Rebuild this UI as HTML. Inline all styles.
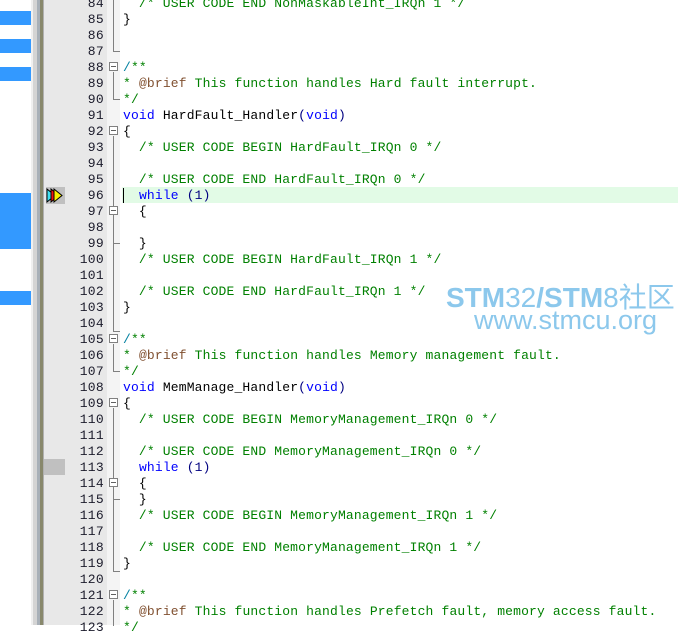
<!DOCTYPE html>
<html><head><meta charset="utf-8"><style>
*{margin:0;padding:0}
body{width:678px;height:625px;overflow:hidden;background:#fff;position:relative;font-family:"Liberation Mono",monospace;font-size:13px}
.a{position:absolute}
.ln{position:absolute;left:44px;width:60px;text-align:right;height:16px;line-height:16px;color:#1a1a2a;margin-top:1px;letter-spacing:0.3px}
.cl{position:absolute;left:123px;height:16px;line-height:16px;white-space:pre;color:#000;letter-spacing:0.16px;margin-top:1px}
.c{color:#008000}.k{color:#0000ff}.p{color:#000080}.d{color:#805030}.t{color:#0080a0}
.fb{position:absolute;left:109px;width:9px;height:9px;border:1px solid #808080;background:#fff;box-sizing:border-box}
.fb:after{content:"";position:absolute;left:1px;top:3px;width:5px;height:1px;background:#606060}
.vl{position:absolute;left:113px;width:1px;background:#808080}
.hk{position:absolute;left:113px;width:7px;height:1px;background:#808080}
</style></head><body>
<div class="a" style="left:0;top:0;width:31px;height:625px;background:#fff"></div>
<div class="a" style="left:0;top:11px;width:31px;height:14px;background:#3399ff"></div>
<div class="a" style="left:0;top:39px;width:31px;height:14px;background:#3399ff"></div>
<div class="a" style="left:0;top:67px;width:31px;height:14px;background:#3399ff"></div>
<div class="a" style="left:0;top:193px;width:31px;height:56px;background:#3399ff"></div>
<div class="a" style="left:0;top:291px;width:31px;height:14px;background:#3399ff"></div>
<div class="a" style="left:31px;top:0;width:2px;height:625px;background:#f0f0f0"></div>
<div class="a" style="left:33px;top:0;width:4px;height:625px;background:#d4d4d4"></div>
<div class="a" style="left:37px;top:0;width:3px;height:625px;background:#a8b0b8"></div>
<div class="a" style="left:40px;top:0;width:3px;height:625px;background:#88886c"></div>
<div class="a" style="left:43px;top:0;width:1px;height:625px;background:#b0b0b0"></div>
<div class="a" style="left:44px;top:0;width:63px;height:625px;background:#e8e8e8"></div>
<div class="a" style="left:107px;top:0;width:13px;height:625px;background:#f4f4f4"></div>
<div class="a" style="left:122px;top:187px;width:556px;height:16px;background:#e2fbe6"></div>
<div class="a" style="left:123px;top:188px;width:1px;height:15px;background:#000"></div>
<div class="a" style="left:46px;top:187px;width:19px;height:17px;background:#c0c0c0"></div>
<svg class="a" style="left:46px;top:187px" width="19" height="17"><polygon points="1,2 9,8.5 1,15" fill="#40e0f0" stroke="#000" stroke-width="1"/><polygon points="5,2 13,8.5 5,15" fill="#f01010" stroke="#000" stroke-width="1"/><polygon points="8,2 16,8.5 8,15" fill="#f8f000" stroke="#000" stroke-width="1"/></svg>
<div class="a" style="left:44px;top:459px;width:21px;height:16px;background:#c0c0c0"></div>

<div class="vl" style="top:0;height:51px"></div><div class="hk" style="top:51px"></div>
<div class="vl" style="top:72px;height:27px"></div><div class="hk" style="top:99px"></div>
<div class="vl" style="top:136px;height:195px"></div><div class="hk" style="top:331px"></div>
<div class="hk" style="top:243px"></div>
<div class="vl" style="top:344px;height:27px"></div><div class="hk" style="top:371px"></div>
<div class="vl" style="top:408px;height:163px"></div><div class="hk" style="top:571px"></div>
<div class="hk" style="top:499px"></div>
<div class="vl" style="top:600px;height:26px"></div>
<div class="fb" style="top:62px"></div>
<div class="fb" style="top:126px"></div>
<div class="fb" style="top:206px"></div>
<div class="fb" style="top:334px"></div>
<div class="fb" style="top:398px"></div>
<div class="fb" style="top:478px"></div>
<div class="fb" style="top:590px"></div>

<div class="ln" style="top:-5px">84</div><div class="ln" style="top:11px">85</div><div class="ln" style="top:27px">86</div><div class="ln" style="top:43px">87</div><div class="ln" style="top:59px">88</div><div class="ln" style="top:75px">89</div><div class="ln" style="top:91px">90</div><div class="ln" style="top:107px">91</div><div class="ln" style="top:123px">92</div><div class="ln" style="top:139px">93</div><div class="ln" style="top:155px">94</div><div class="ln" style="top:171px">95</div><div class="ln" style="top:187px">96</div><div class="ln" style="top:203px">97</div><div class="ln" style="top:219px">98</div><div class="ln" style="top:235px">99</div><div class="ln" style="top:251px">100</div><div class="ln" style="top:267px">101</div><div class="ln" style="top:283px">102</div><div class="ln" style="top:299px">103</div><div class="ln" style="top:315px">104</div><div class="ln" style="top:331px">105</div><div class="ln" style="top:347px">106</div><div class="ln" style="top:363px">107</div><div class="ln" style="top:379px">108</div><div class="ln" style="top:395px">109</div><div class="ln" style="top:411px">110</div><div class="ln" style="top:427px">111</div><div class="ln" style="top:443px">112</div><div class="ln" style="top:459px">113</div><div class="ln" style="top:475px">114</div><div class="ln" style="top:491px">115</div><div class="ln" style="top:507px">116</div><div class="ln" style="top:523px">117</div><div class="ln" style="top:539px">118</div><div class="ln" style="top:555px">119</div><div class="ln" style="top:571px">120</div><div class="ln" style="top:587px">121</div><div class="ln" style="top:603px">122</div><div class="ln" style="top:619px">123</div>

<div class="cl" style="top:-5px"><span class="c">  /* USER CODE END NonMaskableInt_IRQn 1 */</span></div>
<div class="cl" style="top:11px">}</div>
<div class="cl" style="top:59px"><span class="t">/</span><span class="c">**</span></div>
<div class="cl" style="top:75px"><span class="c">* </span><span class="d">@brief</span><span class="c"> This function handles Hard fault interrupt.</span></div>
<div class="cl" style="top:91px"><span class="c">*/</span></div>
<div class="cl" style="top:107px"><span class="k">void</span> HardFault_Handler<span class="p">(</span><span class="k">void</span><span class="p">)</span></div>
<div class="cl" style="top:123px">{</div>
<div class="cl" style="top:139px"><span class="c">  /* USER CODE BEGIN HardFault_IRQn 0 */</span></div>
<div class="cl" style="top:171px"><span class="c">  /* USER CODE END HardFault_IRQn 0 */</span></div>
<div class="cl" style="top:187px">  <span class="k">while</span> <span class="p">(1)</span></div>
<div class="cl" style="top:203px">  {</div>
<div class="cl" style="top:235px">  }</div>
<div class="cl" style="top:251px"><span class="c">  /* USER CODE BEGIN HardFault_IRQn 1 */</span></div>
<div class="cl" style="top:283px"><span class="c">  /* USER CODE END HardFault_IRQn 1 */</span></div>
<div class="cl" style="top:299px">}</div>
<div class="cl" style="top:331px"><span class="t">/</span><span class="c">**</span></div>
<div class="cl" style="top:347px"><span class="c">* </span><span class="d">@brief</span><span class="c"> This function handles Memory management fault.</span></div>
<div class="cl" style="top:363px"><span class="c">*/</span></div>
<div class="cl" style="top:379px"><span class="k">void</span> MemManage_Handler<span class="p">(</span><span class="k">void</span><span class="p">)</span></div>
<div class="cl" style="top:395px">{</div>
<div class="cl" style="top:411px"><span class="c">  /* USER CODE BEGIN MemoryManagement_IRQn 0 */</span></div>
<div class="cl" style="top:443px"><span class="c">  /* USER CODE END MemoryManagement_IRQn 0 */</span></div>
<div class="cl" style="top:459px">  <span class="k">while</span> <span class="p">(1)</span></div>
<div class="cl" style="top:475px">  {</div>
<div class="cl" style="top:491px">  }</div>
<div class="cl" style="top:507px"><span class="c">  /* USER CODE BEGIN MemoryManagement_IRQn 1 */</span></div>
<div class="cl" style="top:539px"><span class="c">  /* USER CODE END MemoryManagement_IRQn 1 */</span></div>
<div class="cl" style="top:555px">}</div>
<div class="cl" style="top:587px"><span class="t">/</span><span class="c">**</span></div>
<div class="cl" style="top:603px"><span class="c">* </span><span class="d">@brief</span><span class="c"> This function handles Prefetch fault, memory access fault.</span></div>
<div class="cl" style="top:619px"><span class="c">*/</span></div>

<div class="a" style="left:446px;top:281px;white-space:nowrap;font-family:'Liberation Sans','Noto Sans CJK SC',sans-serif;font-size:28px;line-height:34px;color:#8cc8ec"><b>STM</b>32<b>/STM</b>8社区</div>
<div class="a" style="left:474px;top:304px;white-space:nowrap;font-family:'Liberation Sans',sans-serif;font-size:27px;line-height:32px;color:#8cc8ec">www.stmcu.org</div>
</body></html>
